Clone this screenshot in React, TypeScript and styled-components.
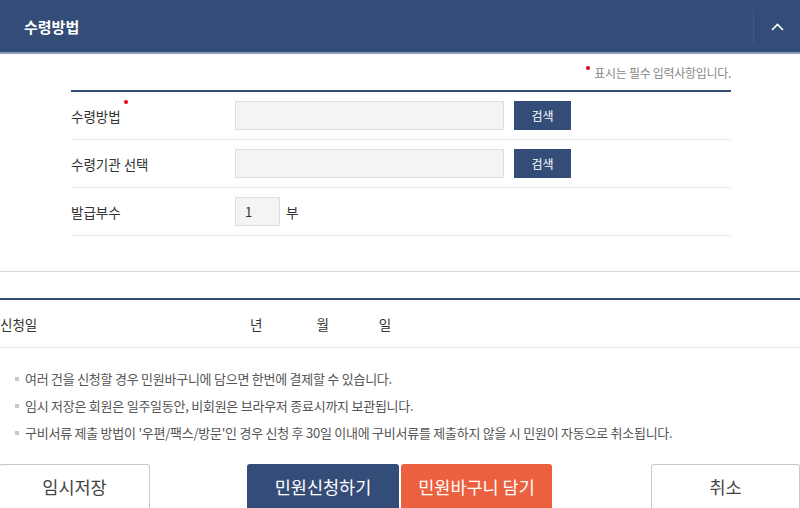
import { FC } from "react";
import styled, { createGlobalStyle } from "styled-components";

const GlobalStyle = createGlobalStyle`
  html, body {
    margin: 0;
    padding: 0;
    background: #fff;
    font-family: "Noto Sans CJK KR", "Noto Sans", sans-serif;
    color: #333;
  }
  * { box-sizing: border-box; }
`;

const NAVY = "#344c78";

const Page = styled.div`
  width: 800px;
  height: 508px;
  overflow: hidden;
`;

const Header = styled.div`
  height: 54px;
  background: ${NAVY};
  border-bottom: 2px solid #8e9cb8;
  display: flex;
  align-items: center;
  justify-content: space-between;
`;

const HeaderTitle = styled.h2`
  margin: 0 0 0 24px;
  font-size: 15px;
  font-weight: 700;
  color: #fff;
`;

const Toggle = styled.button`
  width: 47px;
  height: 36px;
  border: none;
  border-left: 1px solid #415a86;
  background: transparent;
  display: flex;
  align-items: center;
  justify-content: center;
  padding: 0;
  margin-top: 2px;
`;

const Section = styled.div`
  padding: 0 69px 0 71px;
`;

const Required = styled.p`
  margin: 10px 0 0;
  height: 26px;
  text-align: right;
  font-size: 12px;
  color: #888;
  letter-spacing: -0.3px;
`;

const Dot = styled.span`
  display: inline-block;
  width: 4px;
  height: 4px;
  border-radius: 50%;
  background: #e60012;
  vertical-align: top;
  margin: 2px 4px 0 0;
`;

const Table = styled.div`
  border-top: 2px solid ${NAVY};
`;

const Row = styled.div`
  display: flex;
  align-items: center;
  height: 48px;
  border-bottom: 1px solid #e8e8e8;
`;

const Label = styled.div<{ $width: number }>`
  width: ${(p) => p.$width}px;
  font-size: 13.5px;
  color: #333;
  position: relative;
`;

const LabelDot = styled.span`
  position: absolute;
  top: -6px;
  margin-left: 3px;
  width: 4px;
  height: 4px;
  border-radius: 50%;
  background: #e60012;
`;

const Field = styled.div<{ $width: number }>`
  width: ${(p) => p.$width}px;
  height: 29px;
  background: #f4f4f4;
  border: 1px solid #dedede;
  font-size: 13px;
  line-height: 27px;
  padding-left: 9px;
  color: #333;
`;

const SearchButton = styled.button`
  margin-left: 10px;
  width: 57px;
  height: 29px;
  border: none;
  background: ${NAVY};
  color: #fff;
  font-family: inherit;
  font-size: 12px;
`;

const Unit = styled.span`
  margin-left: 6px;
  font-size: 13.5px;
`;

const Divider = styled.div`
  margin-top: 35px;
  border-top: 1px solid #d8d8d8;
  height: 27px;
`;

const DateCell = styled.span<{ $gap: number }>`
  margin-left: ${(p) => p.$gap}px;
  font-size: 13.5px;
`;

const Notes = styled.ul`
  list-style: none;
  margin: 17px 0 0;
  padding: 0 0 0 15px;
`;

const Note = styled.li`
  font-size: 13px;
  color: #555;
  height: 27px;
  line-height: 27px;
  display: flex;
  align-items: center;
  letter-spacing: -0.25px;
  &::before {
    content: "";
    width: 4px;
    height: 4px;
    background: #c8c8c8;
    margin-right: 6px;
  }
`;

const Actions = styled.div`
  margin-top: 18px;
  display: flex;
  align-items: flex-start;
`;

const ActionButton = styled.button<{ $variant: "line" | "navy" | "orange"; $width: number; $ml: number }>`
  margin-left: ${(p) => p.$ml}px;
  width: ${(p) => p.$width}px;
  height: 50px;
  border-radius: 3px 3px 0 0;
  font-family: inherit;
  font-size: 17.5px;
  padding-bottom: 7px;
  border: ${(p) => (p.$variant === "line" ? "1px solid #c9c9c9" : "none")};
  border-bottom: none;
  background: ${(p) =>
    p.$variant === "navy" ? NAVY : p.$variant === "orange" ? "#eb603f" : "#fff"};
  color: ${(p) => (p.$variant === "line" ? "#444" : "#fff")};
`;

const App: FC = () => {
  return (
    <Page>
      <GlobalStyle />
      <Header>
        <HeaderTitle>수령방법</HeaderTitle>
        <Toggle aria-label="접기">
          <svg width="13" height="8" viewBox="0 0 13 8" fill="none">
            <path d="M1 7L6.5 1.5L12 7" stroke="#fff" strokeWidth="1.6" />
          </svg>
        </Toggle>
      </Header>
      <Section>
        <Required>
          <Dot />
          표시는 필수 입력사항입니다.
        </Required>
        <Table>
          <Row>
            <Label $width={164}>
              수령방법
              <LabelDot />
            </Label>
            <Field $width={269} />
            <SearchButton>검색</SearchButton>
          </Row>
          <Row>
            <Label $width={164}>수령기관 선택</Label>
            <Field $width={269} />
            <SearchButton>검색</SearchButton>
          </Row>
          <Row>
            <Label $width={164}>발급부수</Label>
            <Field $width={45}>1</Field>
            <Unit>부</Unit>
          </Row>
        </Table>
      </Section>
      <Divider />
      <Table>
        <Row>
          <Label $width={250}>신청일</Label>
          <DateCell $gap={0}>년</DateCell>
          <DateCell $gap={54}>월</DateCell>
          <DateCell $gap={50}>일</DateCell>
        </Row>
      </Table>
      <Notes>
        <Note>여러 건을 신청할 경우 민원바구니에 담으면 한번에 결제할 수 있습니다.</Note>
        <Note>임시 저장은 회원은 일주일동안, 비회원은 브라우저 종료시까지 보관됩니다.</Note>
        <Note>구비서류 제출 방법이 '우편/팩스/방문'인 경우 신청 후 30일 이내에 구비서류를 제출하지 않을 시 민원이 자동으로 취소됩니다.</Note>
      </Notes>
      <Actions>
        <ActionButton $variant="line" $width={151} $ml={-1}>임시저장</ActionButton>
        <ActionButton $variant="navy" $width={152} $ml={97}>민원신청하기</ActionButton>
        <ActionButton $variant="orange" $width={151} $ml={2}>민원바구니 담기</ActionButton>
        <ActionButton $variant="line" $width={149} $ml={99}>취소</ActionButton>
      </Actions>
    </Page>
  );
};

export default App;
